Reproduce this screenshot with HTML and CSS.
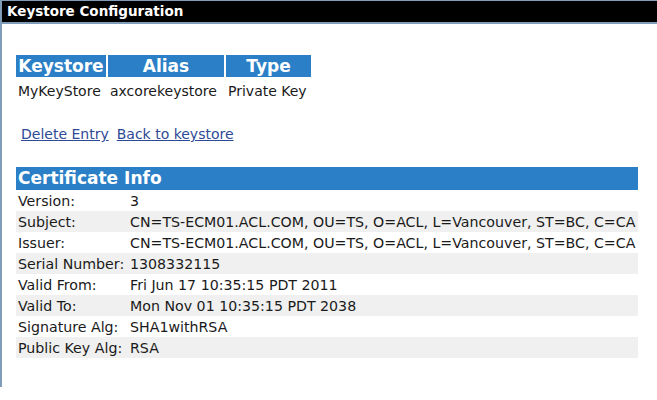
FILE: index.html
```html
<!DOCTYPE html>
<html>
<head>
<meta charset="utf-8">
<link rel="stylesheet" href="styles.css">
</head>
<body>
<div class="panel">
  <div class="titlebar">Keystore Configuration</div>
  <div class="content">
    <table class="keys">
      <thead>
        <tr><th class="c-store">Keystore</th><th class="c-alias">Alias</th><th class="c-type">Type</th></tr>
      </thead>
      <tbody>
        <tr><td>MyKeyStore</td><td>axcorekeystore</td><td>Private Key</td></tr>
      </tbody>
    </table>
    <div class="links">
      <a href="#">Delete Entry</a>
      <a href="#">Back to keystore</a>
    </div>
    <table class="cert">
      <thead>
        <tr><th colspan="2">Certificate Info</th></tr>
      </thead>
      <tbody>
        <tr><td class="lbl">Version:</td><td>3</td></tr>
        <tr class="alt"><td class="lbl">Subject:</td><td>CN=TS-ECM01.ACL.COM, OU=TS, O=ACL, L=Vancouver, ST=BC, C=CA</td></tr>
        <tr><td class="lbl">Issuer:</td><td>CN=TS-ECM01.ACL.COM, OU=TS, O=ACL, L=Vancouver, ST=BC, C=CA</td></tr>
        <tr class="alt"><td class="lbl">Serial Number:</td><td>1308332115</td></tr>
        <tr><td class="lbl">Valid From:</td><td>Fri Jun 17 10:35:15 PDT 2011</td></tr>
        <tr class="alt"><td class="lbl">Valid To:</td><td>Mon Nov 01 10:35:15 PDT 2038</td></tr>
        <tr><td class="lbl">Signature Alg:</td><td>SHA1withRSA</td></tr>
        <tr class="alt"><td class="lbl">Public Key Alg:</td><td>RSA</td></tr>
      </tbody>
    </table>
  </div>
</div>
</body>
</html>
```
FILE: styles.css
```css
html, body {
  margin: 0;
  padding: 0;
  background: #ffffff;
}
body {
  font-family: "DejaVu Sans", Verdana, sans-serif;
  color: #1a1a1a;
}
.panel {
  border-left: 2px solid #7f9db9;
  height: 387px;
  box-sizing: border-box;
}
.titlebar {
  background: #000000;
  border-top: 1px solid #7f9db9;
  border-bottom: 2px solid #7f9db9;
  height: 21px;
  line-height: 21px;
  color: #ffffff;
  font-weight: bold;
  font-size: 13.5px;
  padding-left: 5px;
}
.content {
  padding-left: 12px;
  padding-top: 31px;
}
.keys {
  border-collapse: separate;
  border-spacing: 2px 0;
}
.keys th {
  background: #2b7fc6;
  color: #ffffff;
  font-weight: bold;
  font-size: 17px;
  height: 22px;
  line-height: 22px;
  padding: 0;
  text-align: center;
}
.keys .c-store { width: 90px; }
.keys .c-alias { width: 116px; }
.keys .c-type { width: 85px; }
.keys td {
  font-size: 14px;
  padding: 5px 0 0 2px;
  height: 18px;
  white-space: nowrap;
}
.links {
  margin-top: 26px;
  padding-left: 7px;
  font-size: 14px;
  display: flex;
  gap: 8px;
}
.links a {
  color: #2e4a96;
  text-decoration: underline;
}
.cert {
  margin-top: 25px;
  margin-left: 2px;
  width: 622px;
  border-collapse: collapse;
}
.cert th {
  background: #2b7fc6;
  color: #ffffff;
  font-size: 17px;
  font-weight: bold;
  text-align: left;
  height: 23px;
  line-height: 23px;
  padding: 0 0 0 2px;
}
.cert td {
  font-size: 14.2px;
  height: 21px;
  padding: 0 0 0 2px;
  white-space: nowrap;
}
.cert .lbl {
  width: 110px;
}
.cert tr.alt td {
  background: #f0f0f0;
}
```
